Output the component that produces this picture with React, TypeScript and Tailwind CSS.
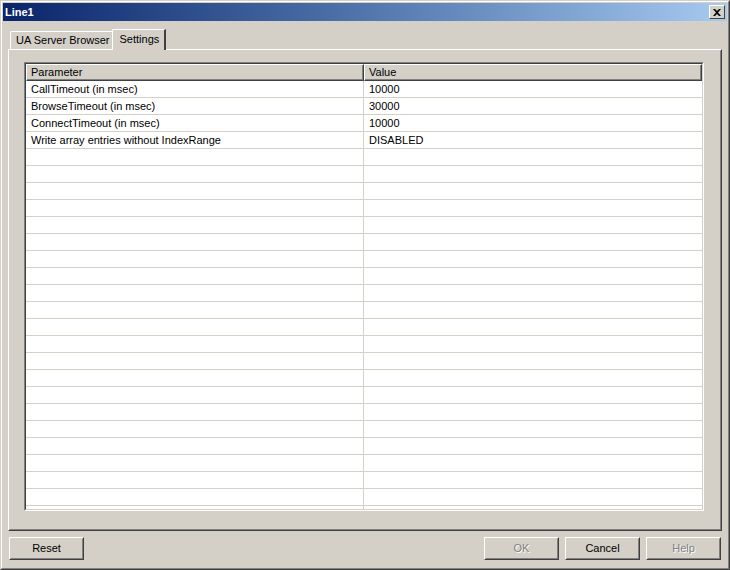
import React from 'react'

const rows = [
  { name: 'CallTimeout (in msec)', value: '10000' },
  { name: 'BrowseTimeout (in msec)', value: '30000' },
  { name: 'ConnectTimeout (in msec)', value: '10000' },
  { name: 'Write array entries without IndexRange', value: 'DISABLED' },
]

function Button({ label, disabled }: { label: string; disabled?: boolean }) {
  return (
    <div className="w-[75px] h-[23px] border border-t-white border-l-white border-r-[#404040] border-b-[#404040]">
      <div className="h-full border border-t-[#d4d0c8] border-l-[#d4d0c8] border-r-[#808080] border-b-[#808080] flex items-center justify-center">
        {disabled ? (
          <span className="text-[#808080] [text-shadow:1px_1px_0_#ffffff]">{label}</span>
        ) : (
          <span className="text-black">{label}</span>
        )}
      </div>
    </div>
  )
}

export default function App() {
  const empty = Array.from({ length: 24 })

  return (
    <div
      className="w-[730px] h-[570px] bg-[#d4d0c8] border border-t-[#d4d0c8] border-l-[#d4d0c8] border-r-[#404040] border-b-[#404040] text-[11px] text-black"
      style={{ fontFamily: '"Liberation Sans", Arial, sans-serif' }}
    >
      <div className="h-full border border-t-white border-l-white border-r-[#808080] border-b-[#808080] p-px flex flex-col">
        {/* Title bar */}
        <div className="h-[18px] flex items-center justify-between bg-gradient-to-r from-[#0a246a] to-[#a6caf0] pl-[2px] pr-[2px]">
          <span className="text-white font-bold text-[11px] leading-[14px] -mt-px">Line1</span>
          <div className="w-[16px] h-[14px] bg-[#d4d0c8] border border-t-white border-l-white border-r-[#404040] border-b-[#404040] flex items-center justify-center">
            <svg width="8" height="7" viewBox="0 0 8 7">
              <path d="M0 0h2l2 2 2-2h2L5 3.5 8 7H6L4 5 2 7H0l3-3.5z" fill="#000" />
            </svg>
          </div>
        </div>

        {/* Tabs */}
        <div className="mt-[8px] mx-[5px] flex items-end h-[20px] relative z-10">
          <div className="ml-[2px] h-[18px] pl-[5px] pr-[4px] flex items-center border-t border-l border-t-white border-l-white border-r border-r-[#404040] rounded-tl-[2px]">
            UA Server Browser
          </div>
          <div className="-ml-[3px] h-[21px] -mb-px pl-[7px] pr-[5px] pb-[2px] flex items-center bg-[#d4d0c8] border-t border-l border-t-white border-l-white border-r-2 border-r-[#404040] rounded-tl-[2px]">
            Settings
          </div>
        </div>

        {/* Tab panel */}
        <div className="mx-[5px] h-[482px] border border-t-white border-l-white border-r-[#404040] border-b-[#404040]">
          <div className="h-full border border-t-[#d4d0c8] border-l-[#d4d0c8] border-r-[#808080] border-b-[#808080] pl-[14px] pt-[11px]">
            {/* Grid */}
            <div className="w-[680px] h-[449px] border border-t-[#808080] border-l-[#808080] border-r-white border-b-white">
              <div className="h-full border border-t-[#404040] border-l-[#404040] border-r-[#d4d0c8] border-b-[#d4d0c8] bg-white overflow-hidden">
                <div className="flex h-[17px]">
                  <div className="w-[338px] border border-t-white border-l-white border-r-[#404040] border-b-[#404040] bg-[#d4d0c8]">
                    <div className="h-full border-r border-b border-r-[#808080] border-b-[#808080] pl-[4px] leading-[15px]">Parameter</div>
                  </div>
                  <div className="w-[338px] border border-t-white border-l-white border-r-[#404040] border-b-[#404040] bg-[#d4d0c8]">
                    <div className="h-full border-r border-b border-r-[#808080] border-b-[#808080] pl-[4px] leading-[15px]">Value</div>
                  </div>
                </div>
                {rows.map((r) => (
                  <div key={r.name} className="flex h-[17px] border-b border-[#d4d0c8]">
                    <div className="w-[338px] border-r border-[#d4d0c8] pl-[5px] leading-[17px]">{r.name}</div>
                    <div className="w-[338px] pl-[5px] leading-[17px]">{r.value}</div>
                  </div>
                ))}
                {empty.map((_, i) => (
                  <div key={i} className="flex h-[17px] border-b border-[#d4d0c8]">
                    <div className="w-[338px] border-r border-[#d4d0c8]" />
                    <div className="w-[338px]" />
                  </div>
                ))}
              </div>
            </div>
          </div>
        </div>

        {/* Buttons */}
        <div className="mt-[6px] mx-[6px] flex items-center">
          <Button label="Reset" />
          <div className="ml-auto flex gap-[6px]">
            <Button label="OK" disabled />
            <Button label="Cancel" />
            <Button label="Help" disabled />
          </div>
        </div>
      </div>
    </div>
  )
}
